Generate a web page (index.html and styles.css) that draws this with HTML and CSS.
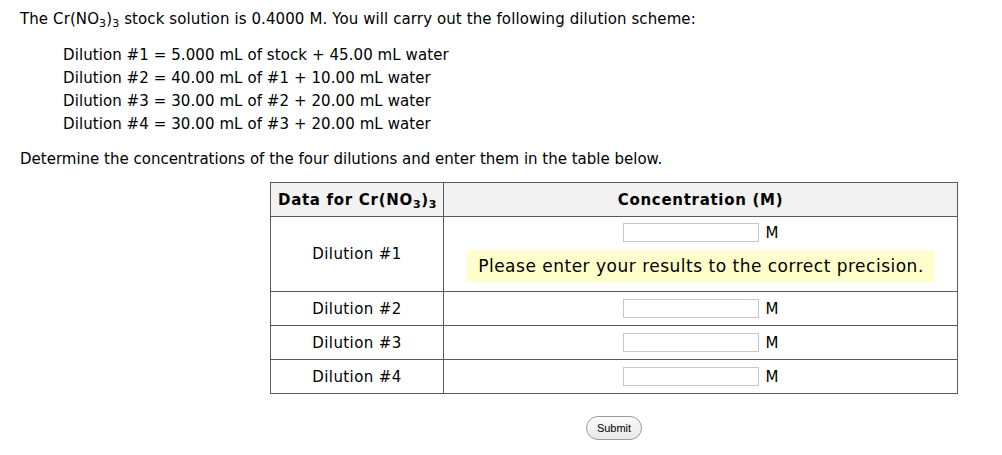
FILE: index.html
```html
<!DOCTYPE html>
<html>
<head>
<meta charset="utf-8">
<link rel="stylesheet" href="styles.css">
</head>
<body>
<div class="page">
  <p class="intro">The Cr(NO<sub>3</sub>)<sub>3</sub> stock solution is 0.4000 M. You will carry out the following dilution scheme:</p>
  <ul class="scheme">
    <li>Dilution #1 = 5.000 mL of stock + 45.00 mL water</li>
    <li>Dilution #2 = 40.00 mL of #1 + 10.00 mL water</li>
    <li>Dilution #3 = 30.00 mL of #2 + 20.00 mL water</li>
    <li>Dilution #4 = 30.00 mL of #3 + 20.00 mL water</li>
  </ul>
  <p class="task">Determine the concentrations of the four dilutions and enter them in the table below.</p>
  <div class="work">
    <table class="data">
      <thead>
        <tr>
          <th class="c1">Data for Cr(NO<sub>3</sub>)<sub>3</sub></th>
          <th class="c2">Concentration (M)</th>
        </tr>
      </thead>
      <tbody>
        <tr class="first">
          <td class="c1">Dilution #1</td>
          <td class="c2">
            <div class="entry"><input type="text" class="ans"><span class="unit">M</span></div>
            <div class="hint">Please enter your results to the correct precision.</div>
          </td>
        </tr>
        <tr>
          <td class="c1">Dilution #2</td>
          <td class="c2"><div class="entry"><input type="text" class="ans"><span class="unit">M</span></div></td>
        </tr>
        <tr>
          <td class="c1">Dilution #3</td>
          <td class="c2"><div class="entry"><input type="text" class="ans"><span class="unit">M</span></div></td>
        </tr>
        <tr>
          <td class="c1">Dilution #4</td>
          <td class="c2"><div class="entry"><input type="text" class="ans"><span class="unit">M</span></div></td>
        </tr>
      </tbody>
    </table>
    <div class="actions"><button type="button" class="submit">Submit</button></div>
  </div>
</div>
</body>
</html>
```

FILE: styles.css
```css
html, body {
  margin: 0;
  padding: 0;
  background: #fff;
}
body {
  font-family: "DejaVu Sans", Verdana, sans-serif;
  font-size: 15px;
  color: #000;
}
.page {
  padding: 9px 0 0 20px;
}
p {
  margin: 0;
}
sub {
  font-size: 11px;
  vertical-align: -3px;
  line-height: 0;
}
.intro {
  line-height: 20px;
  letter-spacing: 0.1px;
}
.scheme {
  list-style: none;
  margin: 15px 0 0 43px;
  padding: 0;
}
.scheme li {
  line-height: 23px;
  letter-spacing: 0.08px;
}
.task {
  margin-top: 13px;
  line-height: 20px;
}
.work {
  margin: 13px 0 0 250px;
  width: 688px;
}
.data {
  width: 688px;
  border-collapse: collapse;
  border: 1px solid #5a5a5a;
}
.data th, .data td {
  border: 1px solid #5a5a5a;
  padding: 0;
}
.data th {
  background: #f2f2f2;
  height: 33px;
  font-weight: bold;
  letter-spacing: 0.7px;
}
.data th.c1 {
  text-align: left;
  padding-left: 7px;
  width: 165px;
}
.data th.c2 {
  text-align: center;
}
.data td {
  height: 33px;
}
.data td.c1 {
  text-align: center;
  letter-spacing: 0.4px;
}
.data td.c2 {
  text-align: center;
}
.first td {
  height: 68px;
}
.first td.c2 {
  vertical-align: top;
  padding-top: 6px;
}
.entry {
  display: flex;
  justify-content: center;
  align-items: center;
  gap: 7px;
  height: 19px;
}
.ans {
  width: 136px;
  height: 19px;
  box-sizing: border-box;
  border: 1px solid #c8c8c8;
  margin: 0;
  padding: 0 2px;
  background: #fff;
}
.unit {
  display: inline-block;
  width: 13px;
  text-align: left;
}
.hint {
  display: block;
  width: fit-content;
  margin: 8px auto 0;
  background: #ffffcc;
  font-size: 17px;
  letter-spacing: 0.5px;
  line-height: 20px;
  padding: 6px 10px 6px 11px;
}
.actions {
  display: flex;
  justify-content: center;
  margin-top: 22px;
}
.submit {
  font-family: "Liberation Sans", Arial, sans-serif;
  font-size: 11px;
  height: 24px;
  width: 56px;
  padding: 0;
  border: 1px solid #9a9a9a;
  border-radius: 12px;
  background: linear-gradient(#fbfbfb, #e8e8e8);
  color: #000;
}
```
